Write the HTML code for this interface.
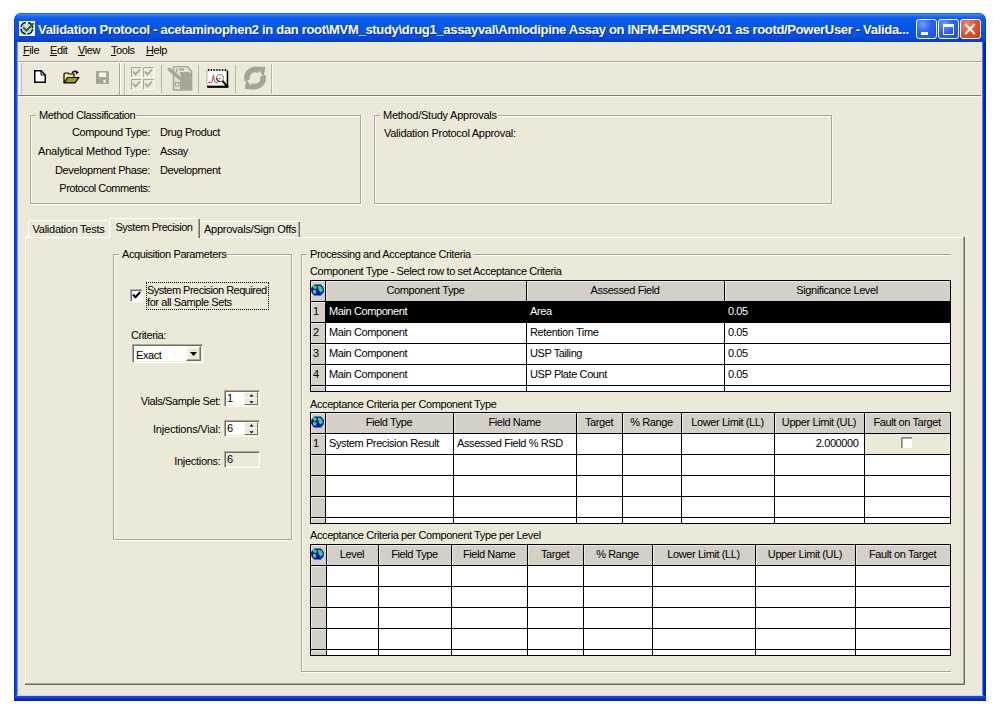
<!DOCTYPE html>
<html><head><meta charset="utf-8">
<style>
html,body{margin:0;padding:0;background:#fff;}
body{width:1000px;height:718px;overflow:hidden;position:relative;font-family:"Liberation Sans",sans-serif;}
.t{position:absolute;font-size:11px;line-height:13px;white-space:nowrap;letter-spacing:-0.4px;color:#000;}
.u{text-decoration:underline;}
</style></head><body>

<div style="position:absolute;left:14px;top:13px;width:972px;height:688px;background:#0a3fd8;border-radius:7px 7px 0 0"></div>
<div style="position:absolute;left:15px;top:13px;width:970px;height:29px;border-radius:7px 7px 0 0;background:linear-gradient(to bottom,#1a52d8 0px,#3a88fa 1.5px,#1e6ef4 3px,#0a5ce8 6px,#0656e8 15px,#0552e2 22px,#0446d4 26px,#0a3cc8 29px)"></div>
<div style="position:absolute;left:14px;top:42px;width:2px;height:659px;background:#0a36dc"></div>
<div style="position:absolute;left:16px;top:42px;width:1px;height:659px;background:#1a4ee8"></div>
<div style="position:absolute;left:17px;top:42px;width:1px;height:654px;background:#7098ec"></div>
<div style="position:absolute;left:984px;top:42px;width:2px;height:659px;background:#0020c0"></div>
<div style="position:absolute;left:983px;top:42px;width:1px;height:659px;background:#0a36d8"></div>
<div style="position:absolute;left:982px;top:42px;width:1px;height:654px;background:#4a78e4"></div>
<div style="position:absolute;left:14px;top:696px;width:972px;height:5px;background:linear-gradient(to bottom,#1a4ee8,#0a30c8 60%,#001ea0)"></div>
<div style="position:absolute;left:17px;top:695px;width:966px;height:1px;background:#c8d8f4"></div>
<div style="position:absolute;left:18px;top:42px;width:964px;height:653px;background:#ece9d8"></div>
<svg style="position:absolute;left:19px;top:21px" width="16" height="15" viewBox="0 0 16 15">
<rect x="0" y="0" width="16" height="15" fill="#f4fbff"/>
<circle cx="7.8" cy="7.3" r="4.6" fill="#bcd4cc"/>
<circle cx="7.8" cy="7.3" r="5.8" fill="none" stroke="#1c1c58" stroke-width="1.7" stroke-dasharray="7.6 1.5" stroke-dashoffset="8.35"/>
<line x1="7.6" y1="0" x2="7.6" y2="6" stroke="#f4fbff" stroke-width="1.2"/>
<path d="M4.2 6.3 L7.4 9.6 L14.8 2.2" fill="none" stroke="#1e6e22" stroke-width="1.9"/>
</svg>
<div style="position:absolute;left:38px;top:20px;font-size:13px;line-height:20px;font-weight:bold;color:#fff;white-space:nowrap;letter-spacing:-0.31px;text-shadow:1px 1px 0 #0a2aa0">Validation Protocol - acetaminophen2 in dan root\MVM_study\drug1_assayval\Amlodipine Assay on INFM-EMPSRV-01 as rootd/PowerUser - Valida...</div>
<div style="position:absolute;left:916px;top:19px;width:21px;height:20px;box-sizing:border-box;border:1px solid #fff;border-radius:3px;background:radial-gradient(circle at 30% 25%,#6f9cff 0%,#2a62f0 45%,#1a4fe0 100%)"></div>
<div style="position:absolute;left:938px;top:19px;width:21px;height:20px;box-sizing:border-box;border:1px solid #fff;border-radius:3px;background:radial-gradient(circle at 30% 25%,#6f9cff 0%,#2a62f0 45%,#1a4fe0 100%)"></div>
<div style="position:absolute;left:960px;top:19px;width:21px;height:20px;box-sizing:border-box;border:1px solid #fff;border-radius:3px;background:radial-gradient(circle at 30% 25%,#f08a6a 0%,#e0502a 50%,#c83e18 100%)"></div>
<div style="position:absolute;left:921px;top:32px;width:7px;height:3px;background:#fff"></div>
<div style="position:absolute;left:943px;top:24px;width:11px;height:11px;box-sizing:border-box;border:1px solid #fff;border-top-width:3px"></div>
<svg style="position:absolute;left:964px;top:23px" width="12" height="12" viewBox="0 0 12 12"><path d="M1.2 1 L10.8 11 M10.8 1 L1.2 11" stroke="#fff" stroke-width="1.9"/></svg>
<div class="t" style="left:23px;top:43.8px"><span class="u">F</span>ile</div>
<div class="t" style="left:50px;top:43.8px"><span class="u">E</span>dit</div>
<div class="t" style="left:78px;top:43.8px"><span class="u">V</span>iew</div>
<div class="t" style="left:111px;top:43.8px"><span class="u">T</span>ools</div>
<div class="t" style="left:146px;top:43.8px"><span class="u">H</span>elp</div>
<div style="position:absolute;left:18px;top:61px;width:964px;height:1px;background:#aca899"></div>
<div style="position:absolute;left:18px;top:62px;width:964px;height:1px;background:#fff"></div>
<div style="position:absolute;left:19px;top:63px;width:1px;height:32px;background:#fff"></div>
<div style="position:absolute;left:21px;top:63px;width:1px;height:32px;background:#c5c2b2"></div>
<div style="position:absolute;left:18px;top:95px;width:963px;height:1px;background:#807d70"></div>
<div style="position:absolute;left:18px;top:96px;width:964px;height:1px;background:#fbfaf4"></div>
<div style="position:absolute;left:119px;top:63px;width:1px;height:32px;background:#aca899"></div>
<div style="position:absolute;left:120px;top:63px;width:1px;height:32px;background:#fff"></div>
<div style="position:absolute;left:124px;top:63px;width:1px;height:32px;background:#c5c2b2"></div>
<div style="position:absolute;left:161px;top:65px;width:1px;height:28px;background:#b8b5a6"></div>
<div style="position:absolute;left:198px;top:65px;width:1px;height:28px;background:#b8b5a6"></div>
<div style="position:absolute;left:235px;top:65px;width:1px;height:28px;background:#b8b5a6"></div>
<div style="position:absolute;left:271px;top:64px;width:1px;height:30px;background:#b8b5a6"></div>
<div style="position:absolute;left:272px;top:64px;width:1px;height:30px;background:#f8f6ee"></div>
<svg style="position:absolute;left:34px;top:70px" width="12" height="13" viewBox="0 0 12 13">
<path d="M0.75 0.75 H7 L11.25 5 V12.25 H0.75 Z" fill="#fff" stroke="#000" stroke-width="1.5"/>
<path d="M7 0.75 V5 H11.25" fill="none" stroke="#000" stroke-width="1"/>
</svg>
<svg style="position:absolute;left:63px;top:70px" width="17" height="14" viewBox="0 0 17 14">
<path d="M1 12.5 V4 L2 3 H5 L6 4 H11 V12.5 Z" fill="#f0f078" stroke="#000" stroke-width="1.2"/>
<path d="M1 12.8 L4.5 7.5 H16 L12 12.8 Z" fill="#9c9c14" stroke="#000" stroke-width="1.2" stroke-linejoin="round"/>
<path d="M9 3.2 Q10.5 0.5 13.5 1.5" fill="none" stroke="#000" stroke-width="1.3"/>
<path d="M12.5 0.2 L15.8 2.2 L13 4.5 Z" fill="#000"/>
</svg>
<svg style="position:absolute;left:96px;top:71px" width="13" height="13" viewBox="0 0 13 13">
<path d="M0 0 H12 L13 1 V13 H0 Z" fill="#aaa798"/>
<rect x="3" y="1.5" width="7" height="4.5" fill="#f4f2ea"/>
<rect x="7.5" y="9" width="2" height="3" fill="#f4f2ea"/>
</svg>
<svg style="position:absolute;left:131px;top:67px" width="24" height="23" viewBox="0 0 24 23">
<g fill="none" stroke="#aca899" stroke-width="1">
<path d="M0.5 10 V0.5 H10"/><path d="M12.5 10 V0.5 H22.5"/>
<path d="M0.5 22.5 V12.5 H10"/><path d="M12.5 22.5 V12.5 H22.5"/>
</g>
<g fill="none" stroke="#fff" stroke-width="1">
<path d="M1 10.5 H10.5 V1"/><path d="M13 10.5 H23 V1"/>
<path d="M1 22.5 H10.5 V13"/><path d="M13 22.5 H23 V13"/>
</g>
<g fill="none" stroke="#a5a293" stroke-width="1.7">
<path d="M2 4.5 L4.5 7.5 L9 2.5"/><path d="M14 4.5 L16.5 7.5 L21 2.5"/>
<path d="M2 16.5 L4.5 19.5 L9 14.5"/><path d="M14 16.5 L16.5 19.5 L21 14.5"/>
</g></svg>
<svg style="position:absolute;left:167px;top:66px" width="26" height="25" viewBox="0 0 26 25">
<path d="M6.5 0.5 H20 L24.5 5 V24 H6.5 Z" fill="#e4e1d4" stroke="#a8a597" stroke-width="1.6"/>
<path d="M13 6 H21 V5 L24 8 V23 H13 Z" fill="#a8a597"/>
<rect x="9" y="2.5" width="1.5" height="4" fill="#a8a597"/>
<rect x="12" y="2.5" width="5" height="2" fill="#a8a597"/>
<rect x="8.5" y="16.5" width="3.5" height="3.5" fill="none" stroke="#a8a597" stroke-width="1.2"/>
<rect x="12" y="9" width="2" height="2" fill="#e4e1d4"/>
<rect x="11" y="12" width="2" height="2" fill="#e4e1d4"/>
<path d="M2.5 3.5 L12.5 12" stroke="#a8a597" stroke-width="3.6" stroke-linecap="round"/>
</svg>
<svg style="position:absolute;left:206px;top:68px" width="24" height="22" viewBox="0 0 24 22">
<rect x="1" y="2" width="20" height="16" fill="#fff" stroke="#b8b6ac" stroke-width="1"/>
<path d="M21.5 2.5 V18.5 H1" fill="none" stroke="#000" stroke-width="1.4"/>
<rect x="1.5" y="18" width="20" height="1.8" fill="#000"/>
<g fill="#000"><rect x="2" y="1" width="1.2" height="2"/><rect x="4.8" y="1" width="1.2" height="2"/><rect x="7.6" y="1" width="1.2" height="2"/><rect x="10.4" y="1" width="1.2" height="2"/><rect x="13.2" y="1" width="1.2" height="2"/><rect x="16" y="1" width="1.2" height="2"/><rect x="18.8" y="1" width="1.2" height="2"/></g>
<path d="M2 14.5 H5 Q6.5 14 7 9 Q7.3 5 7.8 9 Q8.3 14 10 14.5 H12" fill="none" stroke="#e06070" stroke-width="1.3"/>
<circle cx="14" cy="10" r="3.6" fill="#f8f4ee" stroke="#70a080" stroke-width="1"/>
<path d="M10.6 10 A3.6 3.6 0 0 0 14 13.6" fill="none" stroke="#000" stroke-width="1"/>
<circle cx="13.5" cy="10.5" r="0.9" fill="#e06060"/>
<path d="M16.5 12.8 L22 19.5" stroke="#000" stroke-width="2"/>
</svg>
<svg style="position:absolute;left:243px;top:66px" width="24" height="24" viewBox="0 0 24 24">
<g fill="none" stroke="#a8a597" stroke-width="5.5">
<path d="M4.2 14.5 A8.6 8.6 0 0 1 16.5 4.5"/>
<path d="M19.8 9.5 A8.6 8.6 0 0 1 7.5 19.5"/>
</g>
<path d="M13.5 0.5 L22.5 1 L20.5 10.5 Z" fill="#a8a597"/>
<path d="M10.5 23.5 L1.5 23 L3.5 13.5 Z" fill="#a8a597"/>
</svg>
<div style="position:absolute;left:30px;top:115px;width:6px;height:1px;background:#aca899"></div>
<div style="position:absolute;left:31px;top:116px;width:5px;height:1px;background:#fbfaf5"></div>
<div style="position:absolute;left:136px;top:115px;width:225px;height:1px;background:#aca899"></div>
<div style="position:absolute;left:136px;top:116px;width:225px;height:1px;background:#fbfaf5"></div>
<div style="position:absolute;left:30px;top:115px;width:1px;height:89px;background:#aca899"></div>
<div style="position:absolute;left:31px;top:116px;width:1px;height:87px;background:#fbfaf5"></div>
<div style="position:absolute;left:30px;top:203px;width:331px;height:1px;background:#aca899"></div>
<div style="position:absolute;left:30px;top:204px;width:332px;height:1px;background:#fbfaf5"></div>
<div style="position:absolute;left:360px;top:115px;width:1px;height:89px;background:#aca899"></div>
<div style="position:absolute;left:361px;top:115px;width:1px;height:90px;background:#fbfaf5"></div>
<div class="t" style="left:39px;top:108.7px;">Method Classification</div>
<div class="t" style="right:850px;top:126.3px;">Compound Type:</div>
<div class="t" style="left:160px;top:126.3px;">Drug Product</div>
<div class="t" style="right:850px;top:144.5px;letter-spacing:-0.2px">Analytical Method Type:</div>
<div class="t" style="left:160px;top:144.5px;">Assay</div>
<div class="t" style="right:850px;top:163.5px;">Development Phase:</div>
<div class="t" style="left:160px;top:163.5px;">Development</div>
<div class="t" style="right:850px;top:181.7px;letter-spacing:-0.5px">Protocol Comments:</div>
<div style="position:absolute;left:374px;top:115px;width:6px;height:1px;background:#aca899"></div>
<div style="position:absolute;left:375px;top:116px;width:5px;height:1px;background:#fbfaf5"></div>
<div style="position:absolute;left:498px;top:115px;width:334px;height:1px;background:#aca899"></div>
<div style="position:absolute;left:498px;top:116px;width:334px;height:1px;background:#fbfaf5"></div>
<div style="position:absolute;left:374px;top:115px;width:1px;height:89px;background:#aca899"></div>
<div style="position:absolute;left:375px;top:116px;width:1px;height:87px;background:#fbfaf5"></div>
<div style="position:absolute;left:374px;top:203px;width:458px;height:1px;background:#aca899"></div>
<div style="position:absolute;left:374px;top:204px;width:459px;height:1px;background:#fbfaf5"></div>
<div style="position:absolute;left:831px;top:115px;width:1px;height:89px;background:#aca899"></div>
<div style="position:absolute;left:832px;top:115px;width:1px;height:90px;background:#fbfaf5"></div>
<div class="t" style="left:383px;top:108.7px;letter-spacing:-0.25px">Method/Study Approvals</div>
<div class="t" style="left:384px;top:127.3px;letter-spacing:-0.28px">Validation Protocol Approval:</div>
<div style="position:absolute;left:26px;top:237px;width:938px;height:1px;background:#fff"></div>
<div style="position:absolute;left:25px;top:237px;width:1px;height:447px;background:#fff"></div>
<div style="position:absolute;left:963px;top:237px;width:1px;height:447px;background:#aca899"></div>
<div style="position:absolute;left:964px;top:237px;width:1px;height:448px;background:#716f64"></div>
<div style="position:absolute;left:25px;top:683px;width:939px;height:1px;background:#aca899"></div>
<div style="position:absolute;left:25px;top:684px;width:940px;height:1px;background:#716f64"></div>
<div style="position:absolute;left:29px;top:220px;width:79px;height:1px;background:#fff"></div>
<div style="position:absolute;left:28px;top:221px;width:1px;height:16px;background:#fff"></div>
<div class="t" style="left:32.5px;top:222.9px;letter-spacing:-0.25px">Validation Tests</div>
<div style="position:absolute;left:200px;top:221px;width:98px;height:1px;background:#fff"></div>
<div style="position:absolute;left:298px;top:222px;width:1px;height:15px;background:#aca899"></div>
<div style="position:absolute;left:299px;top:222px;width:1px;height:15px;background:#716f64"></div>
<div class="t" style="left:204px;top:223.3px;letter-spacing:-0.25px">Approvals/Sign Offs</div>
<div style="position:absolute;left:109px;top:219px;width:90px;height:20px;background:#ece9d8"></div>
<div style="position:absolute;left:110px;top:218px;width:88px;height:1px;background:#fff"></div>
<div style="position:absolute;left:109px;top:219px;width:1px;height:19px;background:#fff"></div>
<div style="position:absolute;left:198px;top:219px;width:1px;height:19px;background:#aca899"></div>
<div style="position:absolute;left:199px;top:219px;width:1px;height:19px;background:#716f64"></div>
<div class="t" style="left:115.5px;top:220.9px;letter-spacing:-0.5px">System Precision</div>
<div style="position:absolute;left:113px;top:254px;width:6px;height:1px;background:#aca899"></div>
<div style="position:absolute;left:114px;top:255px;width:5px;height:1px;background:#fbfaf5"></div>
<div style="position:absolute;left:225px;top:254px;width:67px;height:1px;background:#aca899"></div>
<div style="position:absolute;left:225px;top:255px;width:67px;height:1px;background:#fbfaf5"></div>
<div style="position:absolute;left:113px;top:254px;width:1px;height:286px;background:#aca899"></div>
<div style="position:absolute;left:114px;top:255px;width:1px;height:284px;background:#fbfaf5"></div>
<div style="position:absolute;left:113px;top:539px;width:179px;height:1px;background:#aca899"></div>
<div style="position:absolute;left:113px;top:540px;width:180px;height:1px;background:#fbfaf5"></div>
<div style="position:absolute;left:291px;top:254px;width:1px;height:286px;background:#aca899"></div>
<div style="position:absolute;left:292px;top:254px;width:1px;height:287px;background:#fbfaf5"></div>
<div class="t" style="left:122px;top:247.7px;">Acquisition Parameters</div>
<div style="position:absolute;left:130px;top:289px;width:13px;height:13px;box-sizing:border-box;background:#fff;border-top:1px solid #aca899;border-left:1px solid #aca899;border-right:1px solid #fff;border-bottom:1px solid #fff;box-shadow:inset 1px 1px 0 #716f64, inset -1px -1px 0 #f1efe2"></div>
<svg style="position:absolute;left:132px;top:291px" width="9" height="8" viewBox="0 0 9 8"><path d="M1 3.5 L3.5 6.2 L8.2 1" fill="none" stroke="#000" stroke-width="2"/></svg>
<div style="position:absolute;left:146px;top:282px;width:123px;height:28px;box-sizing:border-box;border:1px dotted #000"></div>
<div class="t" style="left:147px;top:283.7px;letter-spacing:-0.52px">System Precision Required</div>
<div class="t" style="left:147px;top:296.3px;">for all Sample Sets</div>
<div class="t" style="left:131px;top:328.5px;">Criteria:</div>
<div style="position:absolute;left:132px;top:344px;width:71px;height:19px;box-sizing:border-box;background:#fff;border-top:1px solid #aca899;border-left:1px solid #aca899;border-right:1px solid #fff;border-bottom:1px solid #fff;box-shadow:inset 1px 1px 0 #716f64, inset -1px -1px 0 #f1efe2"></div>
<div style="position:absolute;left:186px;top:346px;width:15px;height:15px;box-sizing:border-box;background:#ece9d8;border-top:1px solid #f1efe2;border-left:1px solid #f1efe2;border-right:1px solid #716f64;border-bottom:1px solid #716f64;box-shadow:inset -1px -1px 0 #aca899, inset 1px 1px 0 #fff"></div>
<svg style="position:absolute;left:190px;top:352px" width="8" height="5" viewBox="0 0 8 5"><path d="M0 0 H7 L3.5 4 Z" fill="#000"/></svg>
<div class="t" style="left:136px;top:349.0px;">Exact</div>
<div class="t" style="right:779.5px;top:394.9px;">Vials/Sample Set:</div>
<div style="position:absolute;left:224px;top:390px;width:36px;height:17px;box-sizing:border-box;background:#fff;border-top:1px solid #aca899;border-left:1px solid #aca899;border-right:1px solid #fff;border-bottom:1px solid #fff;box-shadow:inset 1px 1px 0 #716f64, inset -1px -1px 0 #f1efe2"></div>
<div class="t" style="left:227px;top:392.3px;">1</div>
<div style="position:absolute;left:244px;top:392px;width:14px;height:7px;box-sizing:border-box;background:#ece9d8;border-top:1px solid #f8f7f0;border-left:1px solid #f8f7f0;border-right:1px solid #716f64;border-bottom:1px solid #716f64"></div>
<div style="position:absolute;left:244px;top:398px;width:14px;height:7px;box-sizing:border-box;background:#ece9d8;border-top:1px solid #f8f7f0;border-left:1px solid #f8f7f0;border-right:1px solid #716f64;border-bottom:1px solid #716f64"></div>
<svg style="position:absolute;left:249px;top:394px" width="5" height="3"><path d="M2.5 0.2 L4.5 2.5 H0.5 Z" fill="#000"/></svg>
<svg style="position:absolute;left:249px;top:401px" width="5" height="3"><path d="M0.5 0.2 H4.5 L2.5 2.5 Z" fill="#000"/></svg>
<div class="t" style="right:779.5px;top:423.2px;letter-spacing:-0.2px">Injections/Vial:</div>
<div style="position:absolute;left:224px;top:420px;width:36px;height:17px;box-sizing:border-box;background:#fff;border-top:1px solid #aca899;border-left:1px solid #aca899;border-right:1px solid #fff;border-bottom:1px solid #fff;box-shadow:inset 1px 1px 0 #716f64, inset -1px -1px 0 #f1efe2"></div>
<div class="t" style="left:227px;top:422.3px;">6</div>
<div style="position:absolute;left:244px;top:422px;width:14px;height:7px;box-sizing:border-box;background:#ece9d8;border-top:1px solid #f8f7f0;border-left:1px solid #f8f7f0;border-right:1px solid #716f64;border-bottom:1px solid #716f64"></div>
<div style="position:absolute;left:244px;top:428px;width:14px;height:7px;box-sizing:border-box;background:#ece9d8;border-top:1px solid #f8f7f0;border-left:1px solid #f8f7f0;border-right:1px solid #716f64;border-bottom:1px solid #716f64"></div>
<svg style="position:absolute;left:249px;top:424px" width="5" height="3"><path d="M2.5 0.2 L4.5 2.5 H0.5 Z" fill="#000"/></svg>
<svg style="position:absolute;left:249px;top:431px" width="5" height="3"><path d="M0.5 0.2 H4.5 L2.5 2.5 Z" fill="#000"/></svg>
<div class="t" style="right:779.5px;top:454.9px;letter-spacing:-0.3px">Injections:</div>
<div style="position:absolute;left:224px;top:451px;width:36px;height:17px;box-sizing:border-box;background:#ece9d8;border-top:1px solid #aca899;border-left:1px solid #aca899;border-right:1px solid #fff;border-bottom:1px solid #fff;box-shadow:inset 1px 1px 0 #716f64, inset -1px -1px 0 #f1efe2"></div>
<div class="t" style="left:227px;top:453.3px;">6</div>
<div style="position:absolute;left:301px;top:254px;width:6px;height:1px;background:#aca899"></div>
<div style="position:absolute;left:302px;top:255px;width:5px;height:1px;background:#fbfaf5"></div>
<div style="position:absolute;left:473px;top:254px;width:478px;height:1px;background:#aca899"></div>
<div style="position:absolute;left:473px;top:255px;width:478px;height:1px;background:#fbfaf5"></div>
<div style="position:absolute;left:301px;top:254px;width:1px;height:418px;background:#aca899"></div>
<div style="position:absolute;left:302px;top:255px;width:1px;height:416px;background:#fbfaf5"></div>
<div style="position:absolute;left:301px;top:671px;width:650px;height:1px;background:#aca899"></div>
<div style="position:absolute;left:301px;top:672px;width:651px;height:1px;background:#fbfaf5"></div>
<div class="t" style="left:310px;top:247.7px;">Processing and Acceptance Criteria</div>
<div class="t" style="left:310px;top:265.0px;">Component Type - Select row to set Acceptance Criteria</div>
<div class="t" style="left:310px;top:397.5px;">Acceptance Criteria per Component Type</div>
<div class="t" style="left:310px;top:529.2px;">Acceptance Criteria per Component Type per Level</div>
<div style="position:absolute;left:310px;top:280px;width:640px;height:111px;background:#fff"></div>
<div style="position:absolute;left:310px;top:280px;width:640px;height:21px;background:#d4d0c8"></div>
<div style="position:absolute;left:310px;top:280px;width:15px;height:111px;background:#d4d0c8"></div>
<div style="position:absolute;left:325px;top:301px;width:625px;height:21px;background:#000"></div>
<div style="position:absolute;left:311px;top:281px;width:14px;height:1px;background:#eceae4"></div>
<div style="position:absolute;left:311px;top:281px;width:1px;height:20px;background:#eceae4"></div>
<div style="position:absolute;left:326px;top:281px;width:200px;height:1px;background:#eceae4"></div>
<div style="position:absolute;left:326px;top:281px;width:1px;height:20px;background:#eceae4"></div>
<div style="position:absolute;left:527px;top:281px;width:197px;height:1px;background:#eceae4"></div>
<div style="position:absolute;left:527px;top:281px;width:1px;height:20px;background:#eceae4"></div>
<div style="position:absolute;left:725px;top:281px;width:225px;height:1px;background:#eceae4"></div>
<div style="position:absolute;left:725px;top:281px;width:1px;height:20px;background:#eceae4"></div>
<div style="position:absolute;left:311px;top:302px;width:1px;height:20px;background:#eceae4"></div>
<div style="position:absolute;left:311px;top:302px;width:14px;height:1px;background:#eceae4"></div>
<div style="position:absolute;left:311px;top:323px;width:1px;height:20px;background:#eceae4"></div>
<div style="position:absolute;left:311px;top:323px;width:14px;height:1px;background:#eceae4"></div>
<div style="position:absolute;left:311px;top:344px;width:1px;height:20px;background:#eceae4"></div>
<div style="position:absolute;left:311px;top:344px;width:14px;height:1px;background:#eceae4"></div>
<div style="position:absolute;left:311px;top:365px;width:1px;height:20px;background:#eceae4"></div>
<div style="position:absolute;left:311px;top:365px;width:14px;height:1px;background:#eceae4"></div>
<div style="position:absolute;left:311px;top:386px;width:1px;height:5px;background:#eceae4"></div>
<div style="position:absolute;left:311px;top:386px;width:14px;height:1px;background:#eceae4"></div>
<div style="position:absolute;left:310px;top:280px;width:641px;height:1px;background:#000"></div>
<div style="position:absolute;left:310px;top:301px;width:641px;height:1px;background:#000"></div>
<div style="position:absolute;left:310px;top:322px;width:641px;height:1px;background:#000"></div>
<div style="position:absolute;left:310px;top:343px;width:641px;height:1px;background:#000"></div>
<div style="position:absolute;left:310px;top:364px;width:641px;height:1px;background:#000"></div>
<div style="position:absolute;left:310px;top:385px;width:641px;height:1px;background:#000"></div>
<div style="position:absolute;left:310px;top:391px;width:641px;height:1px;background:#000"></div>
<div style="position:absolute;left:310px;top:280px;width:1px;height:112px;background:#000"></div>
<div style="position:absolute;left:325px;top:280px;width:1px;height:112px;background:#000"></div>
<div style="position:absolute;left:526px;top:280px;width:1px;height:112px;background:#000"></div>
<div style="position:absolute;left:724px;top:280px;width:1px;height:112px;background:#000"></div>
<div style="position:absolute;left:950px;top:280px;width:1px;height:112px;background:#000"></div>
<svg style="position:absolute;left:311px;top:284px" width="13" height="12" viewBox="0 0 13 12">
<path d="M3 0.5 H10 L12.8 4 V8 L10 11.5 H3 L0.2 8 V4 Z" fill="#0610b0"/>
<path d="M0.4 4 L3 0.5 H4 Z" fill="#9aa8f0"/>
<path d="M2 1.8 Q4.5 0.8 6 2.5 L5 5 Q3 5 2 3.8 Z" fill="#30d868"/>
<path d="M2 5.8 Q4.2 5.2 5.5 7 L5 10 Q3 10 2 8.2 Z" fill="#30d868"/>
<path d="M6.8 1.8 Q9.8 1.2 11 3.5 L12 6.2 L10.2 8.5 L8.5 7.5 L7.2 4.8 Z" fill="#30d868"/>
<path d="M8.5 8.5 L10 9 L9 10 Z" fill="#5aa0f0"/>
</svg>
<div class="t" style="left:275.5px;width:300px;text-align:center;top:284.2px;">Component Type</div>
<div class="t" style="left:475.0px;width:300px;text-align:center;top:284.2px;">Assessed Field</div>
<div class="t" style="left:687.0px;width:300px;text-align:center;top:284.2px;">Significance Level</div>
<div class="t" style="left:313px;top:305.2px;color:#000">1</div>
<div class="t" style="left:329px;top:305.2px;color:#fff">Main Component</div>
<div class="t" style="left:530px;top:305.2px;color:#fff">Area</div>
<div class="t" style="left:728px;top:305.2px;color:#fff">0.05</div>
<div class="t" style="left:313px;top:326.2px;color:#000">2</div>
<div class="t" style="left:329px;top:326.2px;color:#000">Main Component</div>
<div class="t" style="left:530px;top:326.2px;color:#000">Retention Time</div>
<div class="t" style="left:728px;top:326.2px;color:#000">0.05</div>
<div class="t" style="left:313px;top:347.2px;color:#000">3</div>
<div class="t" style="left:329px;top:347.2px;color:#000">Main Component</div>
<div class="t" style="left:530px;top:347.2px;color:#000">USP Tailing</div>
<div class="t" style="left:728px;top:347.2px;color:#000">0.05</div>
<div class="t" style="left:313px;top:368.2px;color:#000">4</div>
<div class="t" style="left:329px;top:368.2px;color:#000">Main Component</div>
<div class="t" style="left:530px;top:368.2px;color:#000">USP Plate Count</div>
<div class="t" style="left:728px;top:368.2px;color:#000">0.05</div>
<div style="position:absolute;left:310px;top:412px;width:640px;height:111px;background:#fff"></div>
<div style="position:absolute;left:310px;top:412px;width:640px;height:21px;background:#d4d0c8"></div>
<div style="position:absolute;left:310px;top:412px;width:15px;height:111px;background:#d4d0c8"></div>
<div style="position:absolute;left:864px;top:433px;width:86px;height:21px;background:#ece9d8"></div>
<div style="position:absolute;left:901px;top:437px;width:11px;height:11px;box-sizing:border-box;background:#fff;border-top:1px solid #8d8a7c;border-left:1px solid #8d8a7c;box-shadow:inset 1px 1px 0 #aca899"></div>
<div style="position:absolute;left:311px;top:413px;width:14px;height:1px;background:#eceae4"></div>
<div style="position:absolute;left:311px;top:413px;width:1px;height:20px;background:#eceae4"></div>
<div style="position:absolute;left:326px;top:413px;width:127px;height:1px;background:#eceae4"></div>
<div style="position:absolute;left:326px;top:413px;width:1px;height:20px;background:#eceae4"></div>
<div style="position:absolute;left:454px;top:413px;width:122px;height:1px;background:#eceae4"></div>
<div style="position:absolute;left:454px;top:413px;width:1px;height:20px;background:#eceae4"></div>
<div style="position:absolute;left:577px;top:413px;width:45px;height:1px;background:#eceae4"></div>
<div style="position:absolute;left:577px;top:413px;width:1px;height:20px;background:#eceae4"></div>
<div style="position:absolute;left:623px;top:413px;width:58px;height:1px;background:#eceae4"></div>
<div style="position:absolute;left:623px;top:413px;width:1px;height:20px;background:#eceae4"></div>
<div style="position:absolute;left:682px;top:413px;width:92px;height:1px;background:#eceae4"></div>
<div style="position:absolute;left:682px;top:413px;width:1px;height:20px;background:#eceae4"></div>
<div style="position:absolute;left:775px;top:413px;width:89px;height:1px;background:#eceae4"></div>
<div style="position:absolute;left:775px;top:413px;width:1px;height:20px;background:#eceae4"></div>
<div style="position:absolute;left:865px;top:413px;width:85px;height:1px;background:#eceae4"></div>
<div style="position:absolute;left:865px;top:413px;width:1px;height:20px;background:#eceae4"></div>
<div style="position:absolute;left:311px;top:434px;width:1px;height:20px;background:#eceae4"></div>
<div style="position:absolute;left:311px;top:434px;width:14px;height:1px;background:#eceae4"></div>
<div style="position:absolute;left:311px;top:455px;width:1px;height:20px;background:#eceae4"></div>
<div style="position:absolute;left:311px;top:455px;width:14px;height:1px;background:#eceae4"></div>
<div style="position:absolute;left:311px;top:476px;width:1px;height:20px;background:#eceae4"></div>
<div style="position:absolute;left:311px;top:476px;width:14px;height:1px;background:#eceae4"></div>
<div style="position:absolute;left:311px;top:497px;width:1px;height:20px;background:#eceae4"></div>
<div style="position:absolute;left:311px;top:497px;width:14px;height:1px;background:#eceae4"></div>
<div style="position:absolute;left:311px;top:518px;width:1px;height:5px;background:#eceae4"></div>
<div style="position:absolute;left:311px;top:518px;width:14px;height:1px;background:#eceae4"></div>
<div style="position:absolute;left:310px;top:412px;width:641px;height:1px;background:#000"></div>
<div style="position:absolute;left:310px;top:433px;width:641px;height:1px;background:#000"></div>
<div style="position:absolute;left:310px;top:454px;width:641px;height:1px;background:#000"></div>
<div style="position:absolute;left:310px;top:475px;width:641px;height:1px;background:#000"></div>
<div style="position:absolute;left:310px;top:496px;width:641px;height:1px;background:#000"></div>
<div style="position:absolute;left:310px;top:517px;width:641px;height:1px;background:#000"></div>
<div style="position:absolute;left:310px;top:523px;width:641px;height:1px;background:#000"></div>
<div style="position:absolute;left:310px;top:412px;width:1px;height:112px;background:#000"></div>
<div style="position:absolute;left:325px;top:412px;width:1px;height:112px;background:#000"></div>
<div style="position:absolute;left:453px;top:412px;width:1px;height:112px;background:#000"></div>
<div style="position:absolute;left:576px;top:412px;width:1px;height:112px;background:#000"></div>
<div style="position:absolute;left:622px;top:412px;width:1px;height:112px;background:#000"></div>
<div style="position:absolute;left:681px;top:412px;width:1px;height:112px;background:#000"></div>
<div style="position:absolute;left:774px;top:412px;width:1px;height:112px;background:#000"></div>
<div style="position:absolute;left:864px;top:412px;width:1px;height:112px;background:#000"></div>
<div style="position:absolute;left:950px;top:412px;width:1px;height:112px;background:#000"></div>
<svg style="position:absolute;left:311px;top:416px" width="13" height="12" viewBox="0 0 13 12">
<path d="M3 0.5 H10 L12.8 4 V8 L10 11.5 H3 L0.2 8 V4 Z" fill="#0610b0"/>
<path d="M0.4 4 L3 0.5 H4 Z" fill="#9aa8f0"/>
<path d="M2 1.8 Q4.5 0.8 6 2.5 L5 5 Q3 5 2 3.8 Z" fill="#30d868"/>
<path d="M2 5.8 Q4.2 5.2 5.5 7 L5 10 Q3 10 2 8.2 Z" fill="#30d868"/>
<path d="M6.8 1.8 Q9.8 1.2 11 3.5 L12 6.2 L10.2 8.5 L8.5 7.5 L7.2 4.8 Z" fill="#30d868"/>
<path d="M8.5 8.5 L10 9 L9 10 Z" fill="#5aa0f0"/>
</svg>
<div class="t" style="left:239.0px;width:300px;text-align:center;top:416.2px;">Field Type</div>
<div class="t" style="left:364.5px;width:300px;text-align:center;top:416.2px;">Field Name</div>
<div class="t" style="left:449.0px;width:300px;text-align:center;top:416.2px;">Target</div>
<div class="t" style="left:501.5px;width:300px;text-align:center;top:416.2px;">% Range</div>
<div class="t" style="left:577.5px;width:300px;text-align:center;top:416.2px;">Lower Limit (LL)</div>
<div class="t" style="left:669.0px;width:300px;text-align:center;top:416.2px;">Upper Limit (UL)</div>
<div class="t" style="left:757.0px;width:300px;text-align:center;top:416.2px;">Fault on Target</div>
<div class="t" style="left:313px;top:437.2px;color:#000">1</div>
<div class="t" style="left:329px;top:437.2px;color:#000">System Precision Result</div>
<div class="t" style="left:457px;top:437.2px;color:#000">Assessed Field % RSD</div>
<div class="t" style="right:141.5px;top:437.2px;color:#000">2.000000</div>
<div style="position:absolute;left:310px;top:544px;width:640px;height:111px;background:#fff"></div>
<div style="position:absolute;left:310px;top:544px;width:640px;height:21px;background:#d4d0c8"></div>
<div style="position:absolute;left:310px;top:544px;width:16px;height:111px;background:#d4d0c8"></div>
<div style="position:absolute;left:311px;top:545px;width:15px;height:1px;background:#eceae4"></div>
<div style="position:absolute;left:311px;top:545px;width:1px;height:20px;background:#eceae4"></div>
<div style="position:absolute;left:327px;top:545px;width:51px;height:1px;background:#eceae4"></div>
<div style="position:absolute;left:327px;top:545px;width:1px;height:20px;background:#eceae4"></div>
<div style="position:absolute;left:379px;top:545px;width:72px;height:1px;background:#eceae4"></div>
<div style="position:absolute;left:379px;top:545px;width:1px;height:20px;background:#eceae4"></div>
<div style="position:absolute;left:452px;top:545px;width:75px;height:1px;background:#eceae4"></div>
<div style="position:absolute;left:452px;top:545px;width:1px;height:20px;background:#eceae4"></div>
<div style="position:absolute;left:528px;top:545px;width:55px;height:1px;background:#eceae4"></div>
<div style="position:absolute;left:528px;top:545px;width:1px;height:20px;background:#eceae4"></div>
<div style="position:absolute;left:584px;top:545px;width:68px;height:1px;background:#eceae4"></div>
<div style="position:absolute;left:584px;top:545px;width:1px;height:20px;background:#eceae4"></div>
<div style="position:absolute;left:653px;top:545px;width:102px;height:1px;background:#eceae4"></div>
<div style="position:absolute;left:653px;top:545px;width:1px;height:20px;background:#eceae4"></div>
<div style="position:absolute;left:756px;top:545px;width:99px;height:1px;background:#eceae4"></div>
<div style="position:absolute;left:756px;top:545px;width:1px;height:20px;background:#eceae4"></div>
<div style="position:absolute;left:856px;top:545px;width:94px;height:1px;background:#eceae4"></div>
<div style="position:absolute;left:856px;top:545px;width:1px;height:20px;background:#eceae4"></div>
<div style="position:absolute;left:311px;top:566px;width:1px;height:20px;background:#eceae4"></div>
<div style="position:absolute;left:311px;top:566px;width:15px;height:1px;background:#eceae4"></div>
<div style="position:absolute;left:311px;top:587px;width:1px;height:20px;background:#eceae4"></div>
<div style="position:absolute;left:311px;top:587px;width:15px;height:1px;background:#eceae4"></div>
<div style="position:absolute;left:311px;top:608px;width:1px;height:20px;background:#eceae4"></div>
<div style="position:absolute;left:311px;top:608px;width:15px;height:1px;background:#eceae4"></div>
<div style="position:absolute;left:311px;top:629px;width:1px;height:20px;background:#eceae4"></div>
<div style="position:absolute;left:311px;top:629px;width:15px;height:1px;background:#eceae4"></div>
<div style="position:absolute;left:311px;top:650px;width:1px;height:5px;background:#eceae4"></div>
<div style="position:absolute;left:311px;top:650px;width:15px;height:1px;background:#eceae4"></div>
<div style="position:absolute;left:310px;top:544px;width:641px;height:1px;background:#000"></div>
<div style="position:absolute;left:310px;top:565px;width:641px;height:1px;background:#000"></div>
<div style="position:absolute;left:310px;top:586px;width:641px;height:1px;background:#000"></div>
<div style="position:absolute;left:310px;top:607px;width:641px;height:1px;background:#000"></div>
<div style="position:absolute;left:310px;top:628px;width:641px;height:1px;background:#000"></div>
<div style="position:absolute;left:310px;top:649px;width:641px;height:1px;background:#000"></div>
<div style="position:absolute;left:310px;top:655px;width:641px;height:1px;background:#000"></div>
<div style="position:absolute;left:310px;top:544px;width:1px;height:112px;background:#000"></div>
<div style="position:absolute;left:326px;top:544px;width:1px;height:112px;background:#000"></div>
<div style="position:absolute;left:378px;top:544px;width:1px;height:112px;background:#000"></div>
<div style="position:absolute;left:451px;top:544px;width:1px;height:112px;background:#000"></div>
<div style="position:absolute;left:527px;top:544px;width:1px;height:112px;background:#000"></div>
<div style="position:absolute;left:583px;top:544px;width:1px;height:112px;background:#000"></div>
<div style="position:absolute;left:652px;top:544px;width:1px;height:112px;background:#000"></div>
<div style="position:absolute;left:755px;top:544px;width:1px;height:112px;background:#000"></div>
<div style="position:absolute;left:855px;top:544px;width:1px;height:112px;background:#000"></div>
<div style="position:absolute;left:950px;top:544px;width:1px;height:112px;background:#000"></div>
<svg style="position:absolute;left:311px;top:548px" width="13" height="12" viewBox="0 0 13 12">
<path d="M3 0.5 H10 L12.8 4 V8 L10 11.5 H3 L0.2 8 V4 Z" fill="#0610b0"/>
<path d="M0.4 4 L3 0.5 H4 Z" fill="#9aa8f0"/>
<path d="M2 1.8 Q4.5 0.8 6 2.5 L5 5 Q3 5 2 3.8 Z" fill="#30d868"/>
<path d="M2 5.8 Q4.2 5.2 5.5 7 L5 10 Q3 10 2 8.2 Z" fill="#30d868"/>
<path d="M6.8 1.8 Q9.8 1.2 11 3.5 L12 6.2 L10.2 8.5 L8.5 7.5 L7.2 4.8 Z" fill="#30d868"/>
<path d="M8.5 8.5 L10 9 L9 10 Z" fill="#5aa0f0"/>
</svg>
<div class="t" style="left:202.0px;width:300px;text-align:center;top:548.2px;">Level</div>
<div class="t" style="left:264.5px;width:300px;text-align:center;top:548.2px;">Field Type</div>
<div class="t" style="left:339.0px;width:300px;text-align:center;top:548.2px;">Field Name</div>
<div class="t" style="left:405.0px;width:300px;text-align:center;top:548.2px;">Target</div>
<div class="t" style="left:467.5px;width:300px;text-align:center;top:548.2px;">% Range</div>
<div class="t" style="left:553.5px;width:300px;text-align:center;top:548.2px;">Lower Limit (LL)</div>
<div class="t" style="left:655.0px;width:300px;text-align:center;top:548.2px;">Upper Limit (UL)</div>
<div class="t" style="left:752.5px;width:300px;text-align:center;top:548.2px;">Fault on Target</div>
</body></html>
